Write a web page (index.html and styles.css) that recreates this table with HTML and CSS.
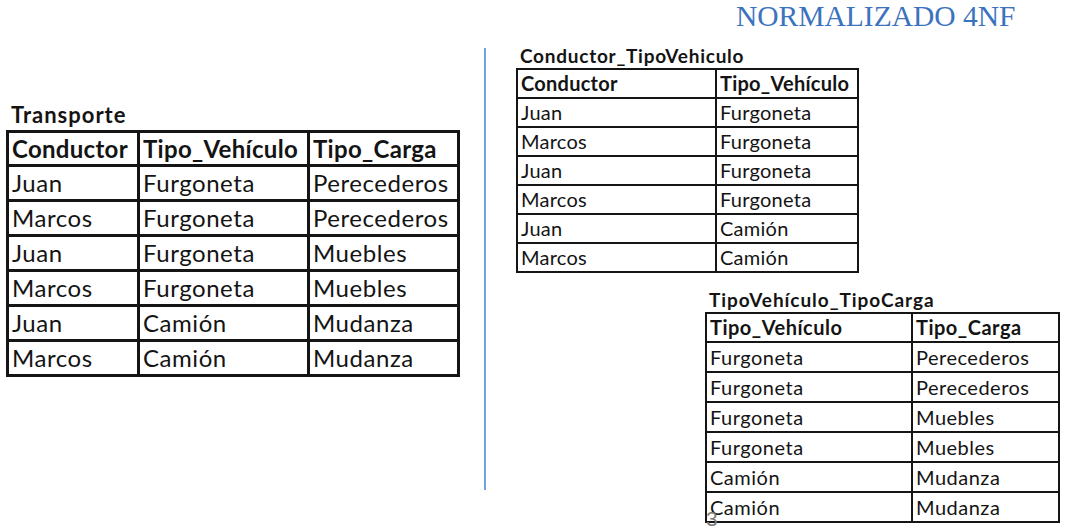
FILE: index.html
```html
<!DOCTYPE html>
<html lang="es">
<head>
<meta charset="utf-8">
<title>Normalizado 4NF</title>
<link rel="stylesheet" href="styles.css">
</head>
<body>
<div class="slide">
  <header class="slide-title">NORMALIZADO 4NF</header>
  <div class="content">
    <section class="left-col">
      <h2 class="tbl-title big">Transporte</h2>
      <table class="tbl t1">
        <colgroup><col class="c1"><col class="c2"><col class="c3"></colgroup>
        <thead><tr><th>Conductor</th><th>Tipo_Vehículo</th><th>Tipo_Carga</th></tr></thead>
        <tbody>
          <tr><td>Juan</td><td>Furgoneta</td><td>Perecederos</td></tr>
          <tr><td>Marcos</td><td>Furgoneta</td><td>Perecederos</td></tr>
          <tr><td>Juan</td><td>Furgoneta</td><td>Muebles</td></tr>
          <tr><td>Marcos</td><td>Furgoneta</td><td>Muebles</td></tr>
          <tr><td>Juan</td><td>Camión</td><td>Mudanza</td></tr>
          <tr><td>Marcos</td><td>Camión</td><td>Mudanza</td></tr>
        </tbody>
      </table>
    </section>
    <div class="divider"></div>
    <section class="right-col">
      <div class="block b2">
        <h2 class="tbl-title small">Conductor_TipoVehiculo</h2>
        <table class="tbl t2">
          <colgroup><col class="c1"><col class="c2"></colgroup>
          <thead><tr><th>Conductor</th><th>Tipo_Vehículo</th></tr></thead>
          <tbody>
            <tr><td>Juan</td><td>Furgoneta</td></tr>
            <tr><td>Marcos</td><td>Furgoneta</td></tr>
            <tr><td>Juan</td><td>Furgoneta</td></tr>
            <tr><td>Marcos</td><td>Furgoneta</td></tr>
            <tr><td>Juan</td><td>Camión</td></tr>
            <tr><td>Marcos</td><td>Camión</td></tr>
          </tbody>
        </table>
      </div>
      <div class="block b3">
        <h2 class="tbl-title small">TipoVehículo_TipoCarga</h2>
        <table class="tbl t3">
          <colgroup><col class="c1"><col class="c2"></colgroup>
          <thead><tr><th>Tipo_Vehículo</th><th>Tipo_Carga</th></tr></thead>
          <tbody>
            <tr><td>Furgoneta</td><td>Perecederos</td></tr>
            <tr><td>Furgoneta</td><td>Perecederos</td></tr>
            <tr><td>Furgoneta</td><td>Muebles</td></tr>
            <tr><td>Furgoneta</td><td>Muebles</td></tr>
            <tr><td>Camión</td><td>Mudanza</td></tr>
            <tr><td>Camión</td><td>Mudanza</td></tr>
          </tbody>
        </table>
        <span class="page-num">3</span>
      </div>
    </section>
  </div>
</div>
</body>
</html>
```

FILE: styles.css
```css
* { box-sizing: border-box; }
html, body { margin: 0; padding: 0; background: #ffffff; }
body { width: 1067px; height: 529px; overflow: hidden; font-family: Lato, "Noto Sans", sans-serif; color: #141414; }

.slide { width: 1067px; height: 529px; }

.slide-title {
  font-family: "Liberation Serif", "Times New Roman", serif;
  font-weight: normal;
  font-size: 29.5px;
  line-height: 32px;
  height: 32px;
  color: #3c73be;
  padding-left: 736px;
  white-space: nowrap;
}

.content { display: flex; align-items: flex-start; }

.left-col { width: 484px; padding-top: 70px; padding-left: 6px; }

.divider { width: 2px; height: 442px; margin-top: 16px; background: #6ea3dd; }

.right-col { flex: 1; padding-top: 12px; }

.block { position: relative; }
.b2 { margin-left: 30px; }
.b3 { margin-left: 219px; margin-top: 15px; }

.tbl-title { margin: 0; font-weight: 700; white-space: nowrap; color: #141414; }
.tbl-title.big { font-size: 22px; line-height: 26px; margin-bottom: 2px; padding-left: 5px; letter-spacing: 1px; }
.tbl-title.small { font-size: 19px; line-height: 23px; margin-bottom: 1px; padding-left: 4px; letter-spacing: 0.75px; }
.b3 .tbl-title.small { letter-spacing: 0.95px; }

.tbl { border-collapse: separate; border-spacing: 0; table-layout: fixed; }
.tbl th, .tbl td { text-align: left; padding: 0 0 0 3px; white-space: nowrap; vertical-align: middle; }
.tbl th { font-weight: 700; }

/* Transporte */
.t1 { border-top: 3px solid #151515; border-left: 3px solid #151515; font-size: 24px; width: 454px; }
.t1 .c1 { width: 131px; }
.t1 .c2 { width: 170px; }
.t1 .c3 { width: 150px; }
.t1 th, .t1 td { border-right: 3px solid #151515; border-bottom: 3px solid #151515; height: 35px; line-height: 32px; letter-spacing: 0.55px; }
.t1 th { height: 34px; line-height: 31px; letter-spacing: 0.3px; }

/* Conductor_TipoVehiculo */
.t2 { border-top: 2px solid #151515; border-left: 2px solid #151515; font-size: 20px; width: 343px; }
.t2 .c1 { width: 199px; }
.t2 .c2 { width: 142px; }
.t2 th, .t2 td { border-right: 2px solid #151515; border-bottom: 2px solid #151515; height: 29px; line-height: 27px; letter-spacing: 0.25px; }

/* TipoVehículo_TipoCarga */
.t3 { border-top: 2px solid #151515; border-left: 2px solid #151515; font-size: 20px; width: 355px; }
.t3 .c1 { width: 206px; }
.t3 .c2 { width: 147px; }
.t3 th, .t3 td { border-right: 2px solid #151515; border-bottom: 2px solid #151515; height: 30px; line-height: 28px; letter-spacing: 0.5px; }
.t3 th { height: 29px; line-height: 27px; }

.page-num {
  position: absolute;
  z-index: 2;
  left: 1px;
  bottom: -6px;
  font-family: "Liberation Sans", sans-serif;
  font-size: 21px;
  line-height: 21px;
  color: #7c7c7c;
}
```
